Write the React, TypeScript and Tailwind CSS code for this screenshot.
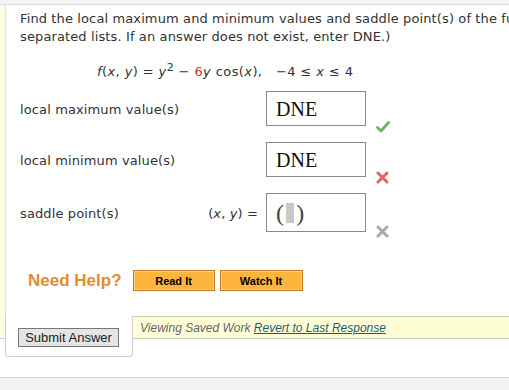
import React from "react";

const verdana = "font-['DejaVu_Sans',Verdana,sans-serif]";
const arial = "font-['Liberation_Sans',Arial,sans-serif]";
const serif = "font-['Liberation_Serif','Times_New_Roman',serif]";

function CheckMark() {
  return (
    <svg width="14" height="12" viewBox="0 0 14 12" aria-hidden>
      <path d="M1.5 6.5 L5 10 L12.5 1.5" fill="none" stroke="#6cb56a" strokeWidth="2.8" strokeLinecap="round" strokeLinejoin="round" />
    </svg>
  );
}

function Cross({ color }: { color: string }) {
  return (
    <svg width="13" height="13" viewBox="0 0 13 13" aria-hidden>
      <path d="M2 2 L11 11 M11 2 L2 11" fill="none" stroke={color} strokeWidth="3" strokeLinecap="round" />
    </svg>
  );
}

function AnswerRow({
  label,
  extra,
  children,
  boxHeight,
  icon,
  iconShift,
}: {
  label: string;
  extra?: React.ReactNode;
  children: React.ReactNode;
  boxHeight: string;
  icon: React.ReactNode;
  iconShift: string;
}) {
  return (
    <div className="flex">
      <div className="flex w-[246px] items-center justify-between pr-[8px] pt-[3px]">
        <span>{label}</span>
        {extra}
      </div>
      <div className={`flex w-[100px] items-center border border-[#8a8a8a] bg-white pl-[9px] ${boxHeight}`}>
        {children}
      </div>
      <div className={`ml-[10px] self-end ${iconShift}`}>{icon}</div>
    </div>
  );
}

export default function App() {
  return (
    <div className={`h-[390px] w-[509px] overflow-hidden bg-white text-[13px] leading-[18px] text-[#333] ${verdana}`}>
      <div className="h-[5px] border-b border-[#dcdcdc] bg-[#f3f3f3]" />

      <div className="flex">
        <div className="w-[6px] shrink-0 border-r border-[#e6e6c4] bg-[#fdfde2]" />
        <div className="w-[800px] shrink-0 pl-[14px] pt-[5px] tracking-[0.12px]">
          <p className="whitespace-nowrap">
            Find the local maximum and minimum values and saddle point(s) of the function. (Enter your answers as comma-
            <br />
            separated lists. If an answer does not exist, enter DNE.)
          </p>

          <div className="mt-[17px] pl-[77px] whitespace-pre tracking-[0.4px]">
            <i>f</i>(<i>x</i>, <i>y</i>) = <i>y</i>
            <sup className="text-[11px]">2</sup> − <span className="text-[#c0392b]">6</span>
            <i>y</i> cos(<i>x</i>),{"   "}−4 ≤ <i>x</i> ≤ 4
          </div>

          <div className="mt-[10px] flex flex-col gap-[16px]">
            <AnswerRow
              label="local maximum value(s)"
              boxHeight="h-[35px]"
              icon={<CheckMark />}
              iconShift="translate-y-[7px]"
            >
              <span className={`${serif} text-[20px] tracking-normal text-[#111]`}>DNE</span>
            </AnswerRow>
            <AnswerRow
              label="local minimum value(s)"
              boxHeight="h-[35px]"
              icon={<Cross color="#e26565" />}
              iconShift="translate-y-[7px]"
            >
              <span className={`${serif} text-[20px] tracking-normal text-[#111]`}>DNE</span>
            </AnswerRow>
            <AnswerRow
              label="saddle point(s)"
              extra={
                <span>
                  (<i>x</i>, <i>y</i>) =
                </span>
              }
              boxHeight="h-[39px]"
              icon={<Cross color="#a9a9a9" />}
              iconShift="translate-y-[6px]"
            >
              <span className={`${serif} flex items-center text-[24px] leading-none text-[#444]`}>
                (<span className="mx-[2px] inline-block h-[20px] w-[8px] bg-[#c9c9c9]" />)
              </span>
            </AnswerRow>
          </div>

          <div className={`mt-[38px] flex items-center pl-[8px] tracking-normal ${arial}`}>
            <span className="text-[17px] font-bold text-[#df8e2e]">Need Help?</span>
            <button className="ml-[11px] h-[21px] w-[82px] border border-[#c47a22] bg-[#fdb540] text-[11px] font-bold text-black shadow-[inset_0_0_0_1px_#fdd08a]">
              Read It
            </button>
            <button className="ml-[5px] h-[21px] w-[83px] border border-[#c47a22] bg-[#fdb540] text-[11px] font-bold text-black shadow-[inset_0_0_0_1px_#fdd08a]">
              Watch It
            </button>
          </div>
          <div className="h-[25px]" />
        </div>
      </div>

      <div className={`flex items-start ${arial}`}>
        <div className="h-[23px] w-[6px] shrink-0 border-r border-b border-[#e6e6c4] border-b-[#d0d0d0] bg-[#fdfde2]" />
        <div className="-ml-[1px] flex h-[41px] w-[128px] shrink-0 items-start rounded-b-[4px] border-x border-b border-[#cfcfcf] bg-white pl-[12px] pt-[12px]">
          <button className="h-[19px] w-[101px] border border-[#777] bg-[#e5e5e5] text-[13px] leading-[17px] text-[#222]">
            Submit Answer
          </button>
        </div>
        <div className="flex h-[23px] flex-1 items-center border-y border-[#cfcbb0] bg-[#fefed6] pl-[7px] text-[12px] italic text-[#666]">
          <span className="whitespace-nowrap">
            Viewing Saved Work <span className="text-[#1f5c78] underline">Revert to Last Response</span>
          </span>
        </div>
      </div>

      <div className="mt-[20px] h-[20px] border-t border-[#d6d6d6] bg-[#f4f4f4]" />
    </div>
  );
}
